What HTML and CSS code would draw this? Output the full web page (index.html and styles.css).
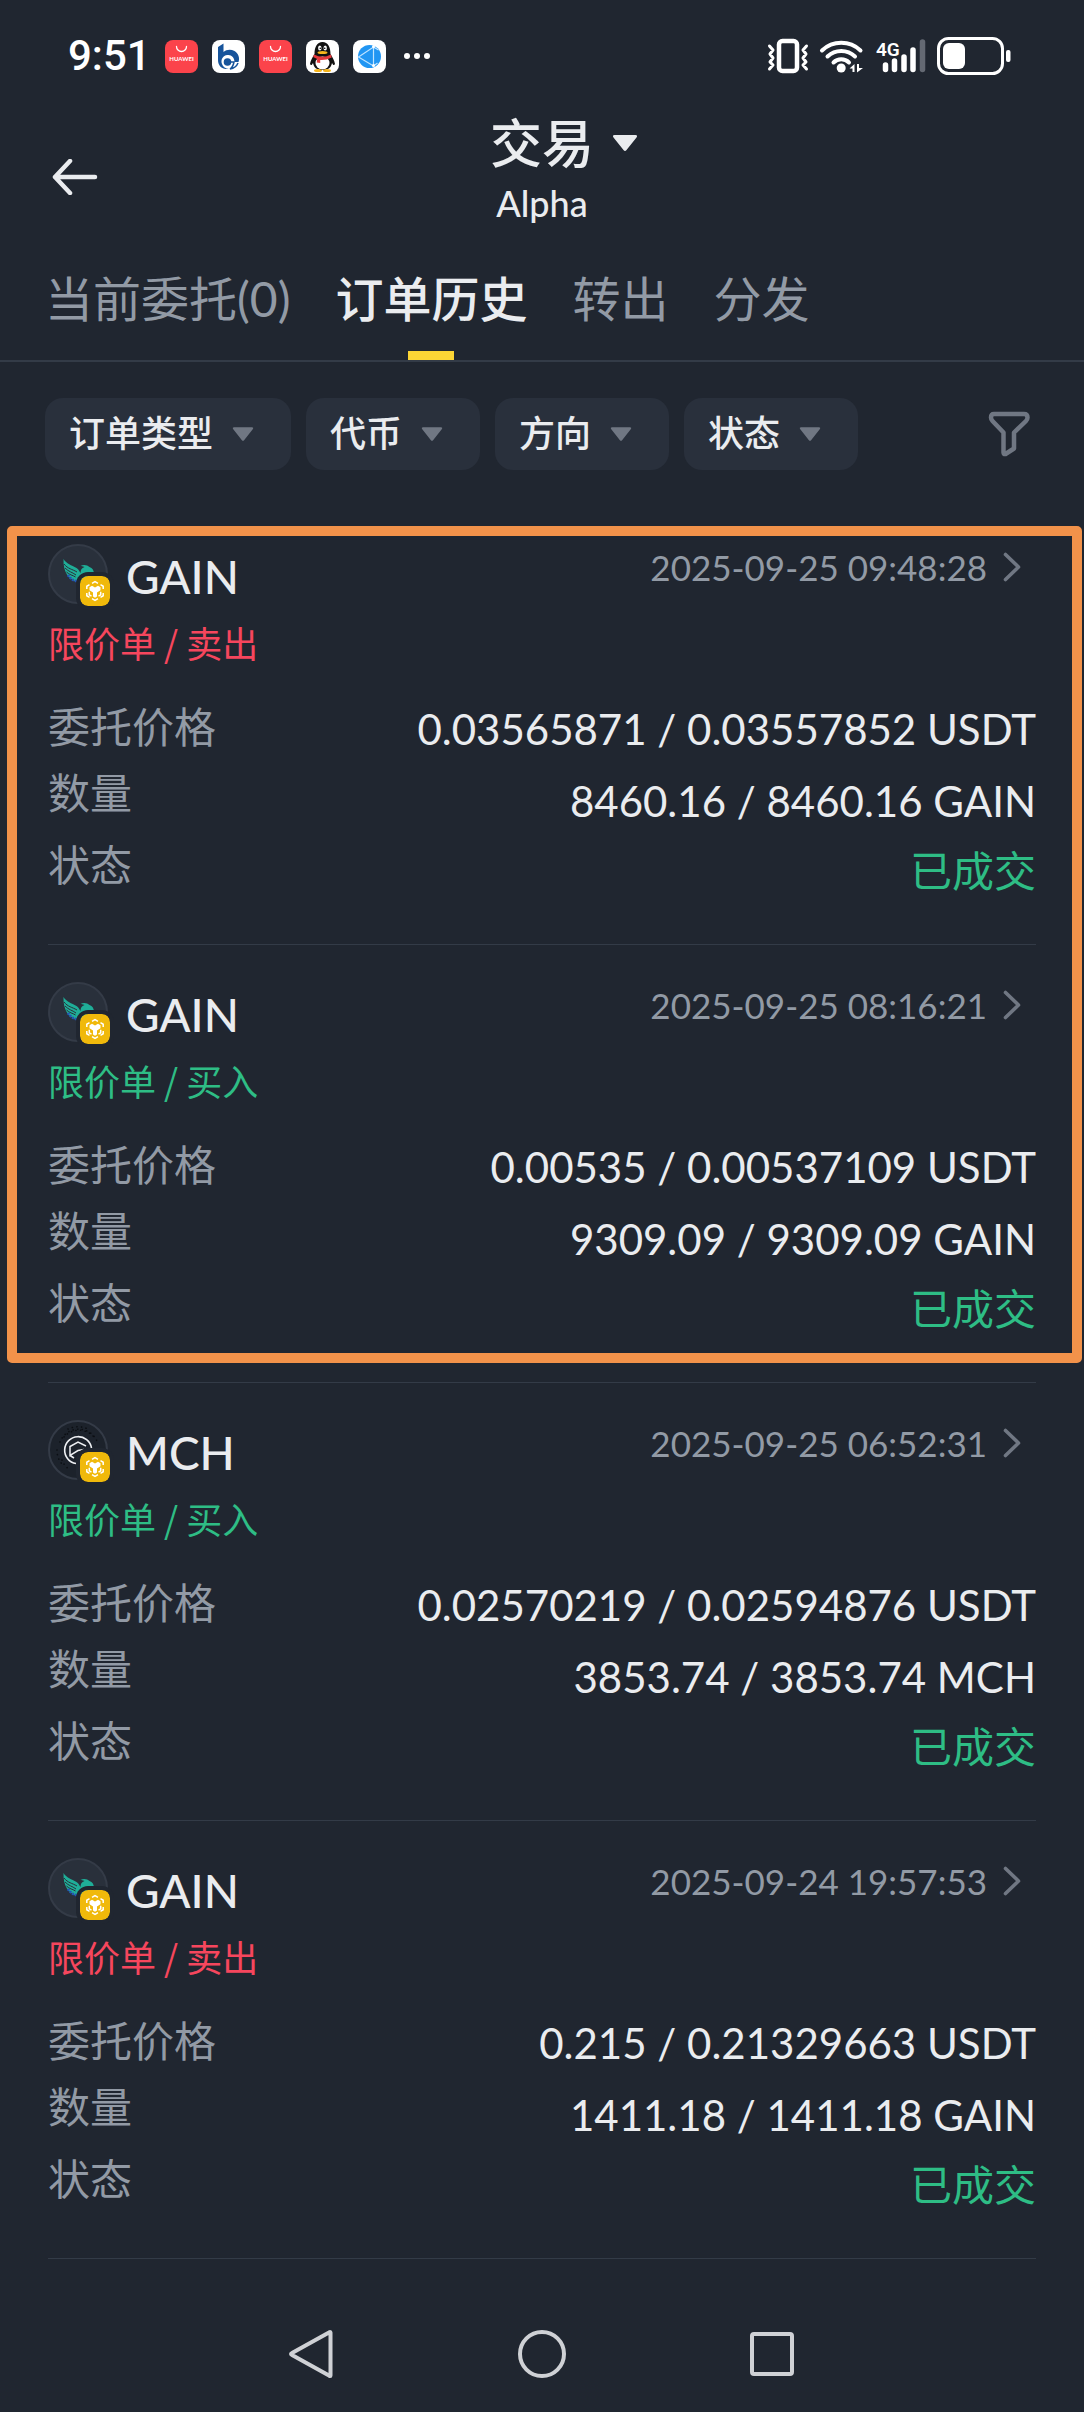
FILE: index.html
```html
<!DOCTYPE html>
<html lang="zh-CN">
<head>
<meta charset="utf-8">
<meta name="viewport" content="width=device-width, initial-scale=1">
<title>交易 Alpha</title>
<link rel="stylesheet" href="styles.css">
</head>
<body>
<svg class="sprite" aria-hidden="true">
  <symbol id="caret" viewBox="0 0 26 18"><path d="M2.500 1h21q2.500 0 1 2.500L14.500 16q-1.500 2-3 0L1.500 3.500Q0 1 2.500 1z" fill="currentColor"/></symbol>
  <symbol id="chevron" viewBox="0 0 18 30"><path d="M2.500 2.500 15.500 15 2.500 27.500" fill="none" stroke="currentColor" stroke-width="3.600" stroke-linecap="round" stroke-linejoin="round"/></symbol>
  <symbol id="coin-gain" viewBox="0 0 60 60">
    <circle cx="30" cy="30" r="29" fill="#29303b" stroke="#343b47" stroke-width="2"/>
    <path d="M15.500 15c3 5 8 6 13 9 3 2 3 4 4 5 0-3 1-5 4-6-2-1-3-1-4-1 3-2 7-1 9 1 3 1 4 3 4.500 6-3-1-5 0-6 2-2 5-8 8-13 6-6-2-12-9-11.500-22z" fill="#1fae98"/>
    <path d="M16 20c4 5 8 5 13 8M17 24c4 4 7 4 11 7M18.500 28c3 3 6 3 9 5" fill="none" stroke="#29303b" stroke-width="1"/>
    <path d="M20 31c2 3 5 6 9 6" fill="none" stroke="#2355b8" stroke-width="2.500" stroke-dasharray="2 1"/>
  </symbol>
  <symbol id="coin-mch" viewBox="0 0 60 60">
    <circle cx="30" cy="30" r="29" fill="#1c222b" stroke="#343b47" stroke-width="2"/>
    <path d="M12 22a20 20 0 0 1 38 2M16 17a20 20 0 0 1 30 0M20 9a24 24 0 0 1 22 1M9 30a21 21 0 0 0 5 14M14 40a20 20 0 0 0 8 10" fill="none" stroke="#0b0e12" stroke-width="1.600" stroke-linecap="round" stroke-dasharray="0.100 4.500"/>
    <path d="M43.500 28A13.500 13.500 0 1 0 28 43.500" fill="none" stroke="#eef0f3" stroke-width="1.600"/>
    <path d="M38 26l-8-4-8 4.500v9l8-5 6-1M22 35.500l4 2.500" fill="none" stroke="#eef0f3" stroke-width="1.500"/>
  </symbol>
  <symbol id="chain" viewBox="0 0 30 30">
    <rect width="30" height="30" rx="8" fill="#f0b90b"/>
    <path d="M12 7.300 15 5.600l3 1.700M6.800 13v-2.700L9.500 8.700M20.500 8.700l2.700 1.600V13M6.800 17v2.700l2.700 1.600M23.200 17v2.700l-2.700 1.600M12 22.700l3 1.700 3-1.700" fill="none" stroke="#fff" stroke-width="1.500"/>
    <path d="M9.500 11.300 12 9.800l3 1.800 3-1.800 2.500 1.500v3L17 16.500v4L15 21.800l-2-1.300v-4l-3.500-2.200z" fill="#fff"/>
    <path d="M9.300 15.800v3l2.200 1.300M20.700 15.800v3l-2.200 1.300" fill="none" stroke="#fff" stroke-width="1.500"/>
  </symbol>
</svg>

<div class="screen">
  <div class="status-bar">
    <div class="status-left">
      <span class="clock">9:51</span>
      <svg class="app-icon" viewBox="0 0 33 33">
        <rect width="33" height="33" rx="8" fill="#fb434b"/>
        <path d="M11.500 6.500a5 5 0 0 0 10 0" fill="none" stroke="#fff" stroke-width="1.300" stroke-linecap="round"/>
        <text class="store-name" x="16.500" y="21">HUAWEI</text>
      </svg>
      <svg class="app-icon" viewBox="0 0 33 33">
        <rect width="33" height="33" rx="8" fill="#fff"/>
        <path d="M6 7l5.500-3.500V12c3-2.500 7-3 11-1 4 2.500 5.500 7 4 11h-4c0-4.500-3-7.500-7-7-5 .5-7 5-5.500 9 1 3 3.500 4.500 7 5C10 29.500 6 26 6 20z" fill="#17549b"/>
        <circle cx="15.500" cy="22" r="3.800" fill="#17549b"/><path d="M16 22h6q-1 5-4 7 6-1 8-6" fill="none" stroke="#17549b" stroke-width="1.500"/>
      </svg>
      <svg class="app-icon" viewBox="0 0 33 33">
        <rect width="33" height="33" rx="8" fill="#fb434b"/>
        <path d="M11.500 6.500a5 5 0 0 0 10 0" fill="none" stroke="#fff" stroke-width="1.300" stroke-linecap="round"/>
        <text class="store-name" x="16.500" y="21">HUAWEI</text>
      </svg>
      <svg class="app-icon" viewBox="0 0 33 33">
        <rect width="33" height="33" rx="8" fill="#fff"/>
        <path d="M8.500 14c0-7 2.500-12 8-12s8 5 8 12c2 3 4 7 4.500 10-1 2-2 1-3-1-1 5-4 7-9.500 7S8 28 7 23c-1 2-2 3-3 1 .5-3 2.500-7 4.500-10z" fill="#111"/>
        <ellipse cx="16.500" cy="23" rx="7" ry="6.500" fill="#fff"/>
        <ellipse cx="13.800" cy="8" rx="1.700" ry="2.500" fill="#fff"/><ellipse cx="19.200" cy="8" rx="1.700" ry="2.500" fill="#fff"/>
        <circle cx="14.300" cy="8.300" r=".8"/><circle cx="18.700" cy="8.300" r=".8"/>
        <ellipse cx="16.500" cy="12.500" rx="5" ry="1.600" fill="#f6b51c"/>
        <path d="M8 14.500q8.500 4.500 17 0l.7 3q-6 3-11.500 2.500v3l-3.500-.5.500-3.500-4-2z" fill="#e5393c"/>
        <ellipse cx="12" cy="30.500" rx="4" ry="1.500" fill="#f6b51c"/><ellipse cx="21" cy="30.500" rx="4" ry="1.500" fill="#f6b51c"/>
      </svg>
      <svg class="app-icon" viewBox="0 0 33 33">
        <rect width="33" height="33" rx="8" fill="#fff"/>
        <circle cx="16.500" cy="16.500" r="11.500" fill="#2196f3"/>
        <path d="M5.500 17 20.500 7v19zM20.500 7l5 3M20.500 26l4-3" fill="none" stroke="#bfe4ff" stroke-width="1.200"/>
        <circle cx="20.500" cy="6.500" r="1.500" fill="#fff"/><circle cx="20.500" cy="25.500" r="1.500" fill="#fff"/>
      </svg>
      <svg class="more" viewBox="0 0 28 6"><circle cx="4" cy="3" r="3"/><circle cx="14" cy="3" r="3"/><circle cx="24" cy="3" r="3"/></svg>
    </div>
    <div class="status-right">
      <svg class="vibrate" viewBox="0 0 42 36">
        <rect x="12" y="3" width="18" height="30" rx="3.500" fill="none" stroke="#fff" stroke-width="4.500"/>
        <path d="M2.500 8l3.500 4-3 4 3 4-3 4 3 3-3.500 4M39.500 8 36 12l3 4-3 4 3 4-3 3 3.500 4" fill="none" stroke="#fff" stroke-width="3" stroke-linecap="round" stroke-linejoin="round"/>
      </svg>
      <svg class="wifi" viewBox="0 0 46 36">
        <path d="M3 12.500a28 28 0 0 1 38.500 0M8.500 18.500a20 20 0 0 1 27.500 0M14.500 24.500a11 11 0 0 1 15.500 0" fill="none" stroke="#fff" stroke-width="4" stroke-linecap="round"/>
        <circle cx="22.200" cy="30" r="4.500" fill="#fff"/>
        <path d="M35.500 26v8h-2v-3.500h-3zM38 34.500v-8.500h2v4h4z" fill="#fff"/>
      </svg>
      <svg class="signal" viewBox="0 0 52 38">
        <text class="network" x="1" y="19">4G</text>
        <g stroke="#fff" stroke-width="5.500" stroke-linecap="round"><path d="M10.500 28v4.500M19.500 24v8.500M29 20v12.500M38 13v19.500"/><path d="M47.500 5v27.500" stroke="#646973"/></g>
      </svg>
      <svg class="battery" viewBox="0 0 74 38">
        <rect x="1.500" y="1.500" width="64" height="35" rx="10" fill="none" stroke="#fff" stroke-width="3"/>
        <rect x="6" y="6" width="22" height="26" rx="6" fill="#fff"/>
        <rect x="69" y="13" width="4.500" height="12" rx="2" fill="#fff"/>
      </svg>
    </div>
  </div>

  <header class="page-header">
    <a class="back" href="#" aria-label="返回">
      <svg viewBox="0 0 46 36"><path d="M18 2 3 18l15 16M3 18h40" fill="none" stroke="currentColor" stroke-width="4.500" stroke-linecap="round" stroke-linejoin="round"/></svg>
    </a>
    <div class="heading">
      <button class="title" type="button"><span>交易</span><svg class="title-caret"><use href="#caret"/></svg></button>
      <span class="subtitle">Alpha</span>
    </div>
  </header>

  <nav class="tabs">
    <a class="tab" href="#">当前委托(0)</a>
    <a class="tab active" href="#" aria-current="page">订单历史</a>
    <a class="tab" href="#">转出</a>
    <a class="tab" href="#">分发</a>
  </nav>

  <form class="filters">
    <div class="chip"><select aria-label="订单类型"><option>订单类型</option></select><svg class="chip-caret"><use href="#caret"/></svg></div>
    <div class="chip"><select aria-label="代币"><option>代币</option></select><svg class="chip-caret"><use href="#caret"/></svg></div>
    <div class="chip"><select aria-label="方向"><option>方向</option></select><svg class="chip-caret"><use href="#caret"/></svg></div>
    <div class="chip"><select aria-label="状态"><option>状态</option></select><svg class="chip-caret"><use href="#caret"/></svg></div>
    <button class="filter-button" type="button" aria-label="筛选">
      <svg viewBox="0 0 42 46"><path d="M6 3h30q3.500 0 3.500 3.500 0 2-1.500 3.500L26 21.500v16l-8.500 5.500q-2 .5-2-1.500v-20L4.500 10Q3 8.500 3 6.500 3 3 6 3z" fill="none" stroke="currentColor" stroke-width="4.500" stroke-linejoin="round"/></svg>
    </button>
  </form>

  <main class="orders">
    <div class="highlight">
      <article class="order">
        <div class="order-head">
          <span class="coin"><svg class="coin-logo"><use href="#coin-gain"/></svg><svg class="coin-chain"><use href="#chain"/></svg></span>
          <h2 class="symbol">GAIN</h2>
          <a class="detail" href="#"><time>2025-09-25 09:48:28</time><svg class="chevron"><use href="#chevron"/></svg></a>
        </div>
        <p class="kind sell">限价单 / 卖出</p>
        <dl class="fields">
          <dt>委托价格</dt><dd>0.03565871 / 0.03557852 USDT</dd>
          <dt>数量</dt><dd>8460.16 / 8460.16 GAIN</dd>
          <dt>状态</dt><dd class="filled">已成交</dd>
        </dl>
      </article>
      <article class="order">
        <div class="order-head">
          <span class="coin"><svg class="coin-logo"><use href="#coin-gain"/></svg><svg class="coin-chain"><use href="#chain"/></svg></span>
          <h2 class="symbol">GAIN</h2>
          <a class="detail" href="#"><time>2025-09-25 08:16:21</time><svg class="chevron"><use href="#chevron"/></svg></a>
        </div>
        <p class="kind buy">限价单 / 买入</p>
        <dl class="fields">
          <dt>委托价格</dt><dd>0.00535 / 0.00537109 USDT</dd>
          <dt>数量</dt><dd>9309.09 / 9309.09 GAIN</dd>
          <dt>状态</dt><dd class="filled">已成交</dd>
        </dl>
      </article>
    </div>
    <article class="order">
      <div class="order-head">
        <span class="coin"><svg class="coin-logo"><use href="#coin-mch"/></svg><svg class="coin-chain"><use href="#chain"/></svg></span>
        <h2 class="symbol">MCH</h2>
        <a class="detail" href="#"><time>2025-09-25 06:52:31</time><svg class="chevron"><use href="#chevron"/></svg></a>
      </div>
      <p class="kind buy">限价单 / 买入</p>
      <dl class="fields">
        <dt>委托价格</dt><dd>0.02570219 / 0.02594876 USDT</dd>
        <dt>数量</dt><dd>3853.74 / 3853.74 MCH</dd>
        <dt>状态</dt><dd class="filled">已成交</dd>
      </dl>
    </article>
    <article class="order">
      <div class="order-head">
        <span class="coin"><svg class="coin-logo"><use href="#coin-gain"/></svg><svg class="coin-chain"><use href="#chain"/></svg></span>
        <h2 class="symbol">GAIN</h2>
        <a class="detail" href="#"><time>2025-09-24 19:57:53</time><svg class="chevron"><use href="#chevron"/></svg></a>
      </div>
      <p class="kind sell">限价单 / 卖出</p>
      <dl class="fields">
        <dt>委托价格</dt><dd>0.215 / 0.21329663 USDT</dd>
        <dt>数量</dt><dd>1411.18 / 1411.18 GAIN</dd>
        <dt>状态</dt><dd class="filled">已成交</dd>
      </dl>
    </article>
  </main>

  <nav class="system-nav">
    <button type="button" aria-label="返回"><svg viewBox="0 0 48 48"><path d="M42.500 2.500v43q0 1-1.500 0L4 25q-2-1 0-2L41 2.500q1.500-1 1.500 0z" fill="none" stroke="currentColor" stroke-width="4" stroke-linejoin="round"/></svg></button>
    <button type="button" aria-label="主屏幕"><svg viewBox="0 0 48 48"><circle cx="24" cy="24" r="22" fill="none" stroke="currentColor" stroke-width="4"/></svg></button>
    <button type="button" aria-label="最近任务"><svg viewBox="0 0 48 48"><rect x="4" y="4" width="40" height="40" rx="2" fill="none" stroke="currentColor" stroke-width="4"/></svg></button>
  </nav>
</div>
</body>
</html>
```

FILE: styles.css
```css
:root {
  --bg: #202630;
  --surface: #29303c;
  --line: #333b47;
  --text: #eaecef;
  --muted: #929aa5;
  --icon: #707783;
  --green: #2ebd85;
  --red: #f6465d;
  --yellow: #fcd535;
  --mark: #f2924a;
}

* {
  box-sizing: border-box;
}

body {
  margin: 0;
  background: var(--bg);
  color: var(--text);
  font-family: Lato, "Noto Sans CJK SC", sans-serif;
}

h2, p, dl, dd {
  margin: 0;
  font-weight: 400;
}

a {
  color: inherit;
  text-decoration: none;
}

button {
  padding: 0;
  border: 0;
  background: none;
  color: inherit;
  font: inherit;
}

svg {
  display: block;
  flex: none;
}

.sprite {
  position: absolute;
  width: 0;
  height: 0;
}

.screen {
  display: flex;
  flex-direction: column;
  min-height: 100vh;
}

/* Status bar */
.status-bar {
  display: flex;
  justify-content: space-between;
  align-items: center;
  height: 112px;
  padding: 0 73px 0 68px;
}

.status-left {
  display: flex;
  align-items: center;
  gap: 14px;
}

.clock {
  font-family: Roboto, sans-serif;
  font-size: 42px;
  font-weight: 500;
  line-height: 48px;
  color: #fff;
}

.app-icon {
  width: 33px;
  height: 33px;
}

.store-name {
  font-size: 6px;
  font-weight: 700;
  text-anchor: middle;
  fill: #fff;
}

.more {
  width: 28px;
  height: 6px;
  margin-left: 3px;
  fill: #fff;
}

.status-right {
  display: flex;
  align-items: center;
  gap: 10px;
}

.vibrate {
  width: 42px;
  height: 36px;
}

.wifi {
  width: 46px;
  height: 36px;
}

.signal {
  width: 52px;
  height: 38px;
}

.network {
  font-family: Roboto, sans-serif;
  font-size: 19px;
  font-weight: 600;
  fill: #fff;
}

.battery {
  width: 74px;
  height: 38px;
}

/* Header */
.page-header {
  display: grid;
  grid-template-columns: 1fr auto 1fr;
  align-items: center;
  height: 128px;
  padding: 0 52px;
}

.back svg {
  width: 46px;
  height: 36px;
}

.heading {
  display: flex;
  flex-direction: column;
  align-items: center;
  padding-bottom: 10px;
}

.title {
  display: grid;
  grid-template-columns: 26px auto 26px;
  gap: 18px;
  align-items: center;
  font-size: 52px;
  font-weight: 500;
  line-height: 62px;
}

.title span {
  grid-column: 2;
}

.title-caret {
  width: 26px;
  height: 18px;
}

.subtitle {
  font-size: 36px;
  font-weight: 500;
  line-height: 58px;
}

/* Tabs */
.tabs {
  display: flex;
  gap: 45px;
  height: 122px;
  padding: 0 45px;
  border-bottom: 2px solid var(--line);
}

.tab {
  position: relative;
  font-size: 48px;
  font-weight: 400;
  line-height: 118px;
  color: var(--muted);
}

.tab.active {
  font-weight: 500;
  color: var(--text);
}

.tab.active::after {
  content: "";
  position: absolute;
  bottom: 0;
  left: 50%;
  width: 46px;
  height: 9px;
  margin-left: -23px;
  background: var(--yellow);
}

/* Filters */
.filters {
  display: flex;
  gap: 15px;
  padding: 36px 54px 37px 45px;
}

.chip {
  display: grid;
  align-items: center;
  height: 72px;
  border-radius: 18px;
  background: var(--surface);
}

.chip select {
  grid-area: 1 / 1;
  height: 72px;
  padding: 0 77px 2px 24px;
  border: 0;
  appearance: none;
  background: none;
  color: var(--text);
  font: 500 36px/70px Lato, "Noto Sans CJK SC", sans-serif;
}

.chip-caret {
  grid-area: 1 / 1;
  justify-self: end;
  width: 22px;
  height: 16px;
  margin-right: 37px;
  color: var(--icon);
  pointer-events: none;
}

.filter-button {
  margin-left: auto;
  color: var(--icon);
}

.filter-button svg {
  width: 42px;
  height: 46px;
}

/* Orders */
.orders {
  flex: 1;
}

.highlight {
  position: relative;
}

.highlight::after {
  content: "";
  position: absolute;
  inset: 19px 2px 20px 7px;
  border: 10px solid var(--mark);
  border-radius: 5px;
  pointer-events: none;
}

.order {
  margin: 0 48px;
  padding: 37px 0 35px;
  border-bottom: 1px solid var(--line);
}

.order-head {
  display: flex;
  height: 60px;
}

.coin {
  position: relative;
  width: 60px;
  height: 60px;
}

.coin-logo {
  width: 60px;
  height: 60px;
}

.coin-chain {
  position: absolute;
  right: -2px;
  bottom: -2px;
  width: 30px;
  height: 30px;
  border-radius: 8px;
  box-shadow: 0 0 0 4px var(--bg);
}

.symbol {
  margin-left: 18px;
  padding-top: 6px;
  font-size: 46px;
  font-weight: 500;
  line-height: 54px;
}

.detail {
  display: flex;
  align-items: center;
  gap: 16px;
  height: 46px;
  margin-left: auto;
  padding-right: 15px;
  font-size: 35px;
  color: var(--muted);
}

.chevron {
  width: 18px;
  height: 30px;
  color: var(--icon);
}

.kind {
  font-family: "Noto Sans CJK SC", sans-serif;
  font-size: 36px;
  line-height: 76px;
}

.sell {
  color: var(--red);
}

.buy,
.filled {
  color: var(--green);
}

.fields {
  display: grid;
  grid-template-columns: auto 1fr;
  grid-auto-rows: 72px;
  margin-top: 13px;
  font-size: 42px;
}

.fields dt {
  line-height: 56px;
  color: var(--muted);
}

.fields dt:first-of-type {
  line-height: 68px;
}

.fields dd {
  line-height: 72px;
  text-align: right;
}

.fields .filled {
  line-height: 68px;
}

/* System navigation */
.system-nav {
  display: flex;
  justify-content: center;
  align-items: center;
  gap: 182px;
  height: 116px;
  color: #cfd1d5;
}

.system-nav svg {
  width: 48px;
  height: 48px;
}
```
